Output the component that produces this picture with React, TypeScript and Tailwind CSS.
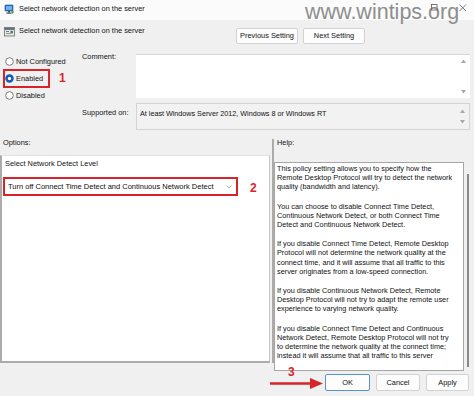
import React from "react";

const helpParas: string[][] = [
  [
    "This policy setting allows you to specify how the",
    "Remote Desktop Protocol will try to detect the network",
    "quality (bandwidth and latency).",
  ],
  [
    "You can choose to disable Connect Time Detect,",
    "Continuous Network Detect, or both Connect Time",
    "Detect and Continuous Network Detect.",
  ],
  [
    "If you disable Connect Time Detect, Remote Desktop",
    "Protocol will not determine the network quality at the",
    "connect time, and it will assume that all traffic to this",
    "server originates from a low-speed connection.",
  ],
  [
    "If you disable Continuous Network Detect, Remote",
    "Desktop Protocol will not try to adapt the remote user",
    "experience to varying network quality.",
  ],
  [
    "If you disable Connect Time Detect and Continuous",
    "Network Detect, Remote Desktop Protocol will not try",
    "to determine the network quality at the connect time;",
    "instead it will assume that all traffic to this server",
  ],
];

function TitleIcon() {
  return (
    <svg width="11" height="11" viewBox="0 0 11 11">
      <rect x="1" y="1" width="8" height="6" rx="0.5" fill="#2f6fc6" stroke="#1d4f91" strokeWidth="0.6" />
      <rect x="2" y="2" width="6" height="4" fill="#6fb0f0" />
      <rect x="4" y="7" width="2" height="1.5" fill="#555" />
      <rect x="2.5" y="8.5" width="5" height="1.2" fill="#444" />
      <path d="M7 5 L10 8 L8 10 Z" fill="#3a9b3a" />
    </svg>
  );
}

function PolicyIcon() {
  return (
    <svg width="11" height="11" viewBox="0 0 11 11">
      <rect x="0.5" y="1.5" width="10" height="8.5" fill="#e6e6e6" stroke="#6b6b6b" strokeWidth="0.8" />
      <rect x="0.9" y="1.9" width="9.2" height="2" fill="#5b6f86" />
      <rect x="2" y="5" width="3" height="1" fill="#7a7a7a" />
      <rect x="2" y="7" width="5" height="1" fill="#9a9a9a" />
      <rect x="6.5" y="4.8" width="2.5" height="2.5" fill="#3f8f4a" />
    </svg>
  );
}

function Radio({ checked }: { checked?: boolean }) {
  return (
    <svg width="9" height="9" viewBox="0 0 9 9">
      {checked ? (
        <>
          <circle cx="4.5" cy="4.5" r="4.2" fill="#0b5cb8" />
          <circle cx="4.5" cy="4.5" r="1.7" fill="#ffffff" />
        </>
      ) : (
        <circle cx="4.5" cy="4.5" r="3.8" fill="#ffffff" stroke="#5f5f5f" strokeWidth="0.8" />
      )}
    </svg>
  );
}

function ScrollArrows({ className }: { className?: string }) {
  return (
    <div className={"flex flex-col justify-between items-center w-[8px] " + (className ?? "")}>
      <svg width="5" height="4" viewBox="0 0 5 4">
        <path d="M0 4 L2.5 0.5 L5 4 Z" fill="#a8a8a8" />
      </svg>
      <svg width="5" height="4" viewBox="0 0 5 4">
        <path d="M0 0 L2.5 3.5 L5 0 Z" fill="#a8a8a8" />
      </svg>
    </div>
  );
}

export default function App() {
  return (
    <div className="relative w-[474px] h-[396px] overflow-hidden bg-[#f0f0f0] flex flex-col text-[7.4px] leading-[10px] text-[#111111] font-['Liberation_Sans',Arial,sans-serif]">
      {/* Title bar */}
      <div className="h-[20px] shrink-0 bg-[#fbfbfb] flex items-start pt-[4px] pl-[4px] gap-[4px]">
        <TitleIcon />
        <span>Select network detection on the server</span>
      </div>
      {/* watermark + window controls (overlay) */}
      <div className="absolute left-[305px] top-[2px] text-[21.5px] leading-[21.5px] text-[#8e8e8e] font-['Liberation_Sans',Arial,sans-serif]">
        www.wintips.org
      </div>
      <svg className="absolute left-[430px] top-[3px]" width="9" height="9" viewBox="0 0 9 9">
        <rect x="1.5" y="1.5" width="5.5" height="5.5" fill="none" stroke="#6a6a6a" strokeWidth="0.9" />
      </svg>
      <svg className="absolute left-[458px] top-[3px]" width="10" height="10" viewBox="0 0 10 10">
        <path d="M1.5 1.5 L8 8 M8 1.5 L1.5 8" stroke="#6a6a6a" strokeWidth="0.9" />
      </svg>

      {/* Row 2 */}
      <div className="h-[30px] shrink-0 flex items-start">
        <div className="w-[236px] flex items-start pl-[4px] pt-[6px] gap-[4px]">
          <PolicyIcon />
          <span>Select network detection on the server</span>
        </div>
        <div className="flex gap-[5px] pt-[8px]">
          <div className="w-[62px] h-[16px] bg-[#fdfdfd] border border-[#d2d2d2] rounded-[2px] flex items-center justify-center">
            Previous Setting
          </div>
          <div className="w-[62px] h-[16px] bg-[#fdfdfd] border border-[#d2d2d2] rounded-[2px] flex items-center justify-center">
            Next Setting
          </div>
        </div>
      </div>

      {/* Upper section */}
      <div className="h-[82px] shrink-0 flex">
        <div className="w-[78px] pt-[3px] flex flex-col">
          <div className="h-[17px] flex items-center pl-[5px] gap-[2px]">
            <Radio />
            <span>Not Configured</span>
          </div>
          <div className="relative h-[17px] flex items-center pl-[5px] gap-[2px]">
            <Radio checked />
            <span>Enabled</span>
            <div className="absolute left-[3px] top-[-1px] w-[47px] h-[19px] border-2 border-[#d9232a]" />
            <span className="absolute left-[59px] top-[1px] text-[12px] leading-[14px] font-bold text-[#d9232a]">1</span>
          </div>
          <div className="h-[17px] flex items-center pl-[5px] gap-[2px]">
            <Radio />
            <span>Disabled</span>
          </div>
        </div>
        <div className="flex flex-col pt-[4px]">
          <div className="flex">
            <div className="w-[58px] pl-[4px] -mt-[2px]">Comment:</div>
            <div className="w-[334px] h-[44px] bg-white border-t border-[#d8d8d8] flex justify-end pr-[3px] py-[4px]">
              <ScrollArrows />
            </div>
          </div>
          <div className="flex mt-[5px]">
            <div className="w-[58px] pl-[4px] pt-[5px]">Supported on:</div>
            <div className="w-[334px] h-[27px] bg-[#f2f2f2] border border-[#d4d4d4] flex pl-[3px] pr-[3px]">
              <div className="flex-1 pt-[5px] text-[7.2px]">At least Windows Server 2012, Windows 8 or Windows RT</div>
              <ScrollArrows className="py-[5px]" />
            </div>
          </div>
        </div>
      </div>

      {/* Lower section */}
      <div className="h-[231px] shrink-0 flex">
        <div className="w-[270px] flex flex-col">
          <div className="pl-[3px] pt-[6px]">Options:</div>
          <div className="relative mt-[7px] flex-1 bg-white border-l-2 border-b-2 border-[#ababab] border-r border-r-[#c6c6c6] border-t border-t-[#e2e2e2] flex flex-col">
            <div className="pl-[3px] pt-[3px]">Select Network Detect Level</div>
            <div className="ml-[1px] mt-[8px] w-[235px] h-[19px] border-2 border-[#d9232a] bg-white flex items-center pl-[3px] pr-[4px] text-[7.5px]">
              <span className="flex-1">Turn off Connect Time Detect and Continuous Network Detect</span>
              <svg width="6" height="4" viewBox="0 0 6 4">
                <path d="M0.5 0.5 L3 3 L5.5 0.5" fill="none" stroke="#9a9a9a" strokeWidth="0.8" />
              </svg>
            </div>
            <span className="absolute left-[248px] top-[25px] text-[12px] leading-[14px] font-bold text-[#d9232a]">2</span>
          </div>
        </div>
        <div className="ml-[2px] flex-1 mt-[7px] border-l-2 border-[#ababab] flex flex-col">
          <div className="pl-[3px] leading-[8px]">Help:</div>
          <div className="mt-[15px] mb-[1px] flex flex-1">
            <div className="w-[190px] h-full bg-white border border-[#a6a6a6] overflow-hidden pl-[2px] pt-[1px] text-[7.3px] leading-[9.2px] whitespace-nowrap">
              {helpParas.map((p, i) => (
                <div key={i} className="mb-[10px]">
                  {p.map((l, j) => (
                    <div key={j}>{l}</div>
                  ))}
                </div>
              ))}
            </div>
            <div className="ml-[3px] mt-[12px] mb-[4px] w-[1.5px] bg-[#8a8a8a]" />
          </div>
        </div>
      </div>

      {/* Bottom buttons */}
      <div className="relative flex-1 flex justify-end items-start pt-[11px] pr-[5px] gap-[6px]">
        <span className="absolute left-[288px] top-[2px] text-[12px] leading-[14px] font-bold text-[#d9232a]">3</span>
        <svg className="absolute left-[270px] top-[14px]" width="54" height="13" viewBox="0 0 54 13">
          <path d="M0 6.5 L42 6.5" stroke="#d9232a" strokeWidth="2.4" />
          <path d="M40 1 L53 6.5 L40 12 Z" fill="#d9232a" />
        </svg>
        <div className="w-[45px] h-[17px] bg-[#fdfdfd] border border-[#5b93cf] rounded-[2px] flex items-center justify-center">
          OK
        </div>
        <div className="w-[44px] h-[17px] bg-[#fdfdfd] border border-[#d2d2d2] rounded-[2px] flex items-center justify-center">
          Cancel
        </div>
        <div className="w-[43px] h-[17px] bg-[#fdfdfd] border border-[#d2d2d2] rounded-[2px] flex items-center justify-center">
          Apply
        </div>
      </div>
    </div>
  );
}
